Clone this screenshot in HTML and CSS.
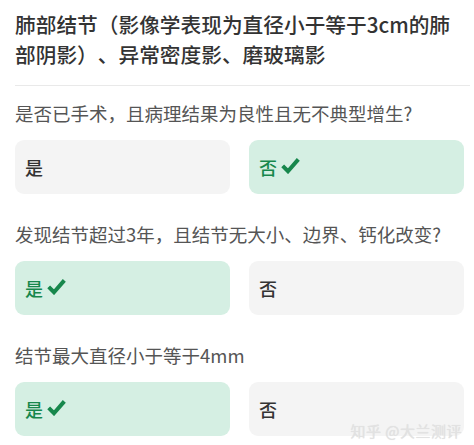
FILE: index.html
```html
<!DOCTYPE html>
<html lang="zh-CN">
<head>
<meta charset="utf-8">
<link rel="stylesheet" href="styles.css">
</head>
<body>
<div class="page">
  <h1 class="title">肺部结节（影像学表现为直径小于等于3cm的肺<br>部阴影）、异常密度影、磨玻璃影</h1>
  <hr class="divider">
  <section class="question">
    <p class="q-text">是否已手术，且病理结果为良性且无不典型增生?</p>
    <div class="options">
      <div class="option">是</div>
      <div class="option selected">否<svg class="check" viewBox="0 0 18 16"><path d="M1.6 8.4 L6.6 13.4 L16.4 2.2" /></svg></div>
    </div>
  </section>
  <section class="question">
    <p class="q-text">发现结节超过3年，且结节无大小、边界、钙化改变?</p>
    <div class="options">
      <div class="option selected">是<svg class="check" viewBox="0 0 18 16"><path d="M1.6 8.4 L6.6 13.4 L16.4 2.2" /></svg></div>
      <div class="option">否</div>
    </div>
  </section>
  <section class="question">
    <p class="q-text">结节最大直径小于等于4mm</p>
    <div class="options">
      <div class="option selected">是<svg class="check" viewBox="0 0 18 16"><path d="M1.6 8.4 L6.6 13.4 L16.4 2.2" /></svg></div>
      <div class="option">否</div>
    </div>
  </section>
  <div class="watermark">知乎 @大兰测评</div>
</div>
</body>
</html>
```
FILE: styles.css
```css
html, body {
  margin: 0;
  padding: 0;
  background: #ffffff;
}
body {
  font-family: "Noto Sans CJK SC", "Noto Sans", sans-serif;
  color: #333;
  text-spacing-trim: space-all;
}
.page {
  position: relative;
  padding: 9px 4px 0 15px;
  height: 436px;
}
.title {
  margin: 0;
  font-size: 20.7px;
  line-height: 30px;
  font-weight: 500;
  color: #333333;
  letter-spacing: 0;
  white-space: nowrap;
}
.divider {
  border: 0;
  height: 1px;
  background: #e9e9e9;
  margin: 16px 0 0 0;
}
.question {
  margin-right: 6px;
}
.question + .question {
  margin-top: 28px;
}
.q-text {
  margin: 15px 0 0 0;
  font-size: 18.5px;
  line-height: 24px;
  color: #555555;
}
.question + .question .q-text {
  margin-top: 0;
}
.options {
  display: grid;
  grid-template-columns: 1fr 1fr;
  gap: 19px;
  margin-top: 15px;
}
.option {
  height: 54px;
  border-radius: 9px;
  background: #f4f4f4;
  display: flex;
  align-items: center;
  padding-left: 10px;
  font-size: 18px;
  font-weight: 500;
  color: #333;
}
.option.selected {
  background: #d5efe3;
  color: #17874c;
}
.check {
  width: 19px;
  height: 17px;
  margin-left: 4px;
  margin-top: -4px;
}
.check path {
  fill: none;
  stroke: #17874c;
  stroke-width: 3.8;
  stroke-linecap: butt;
  stroke-linejoin: miter;
}
.watermark {
  position: absolute;
  right: 12px;
  bottom: 4px;
  font-size: 15px;
  color: #e2e2e2;
  text-shadow: 0 0 1px rgba(0,0,0,0.1);
  letter-spacing: 0.5px;
}
```
